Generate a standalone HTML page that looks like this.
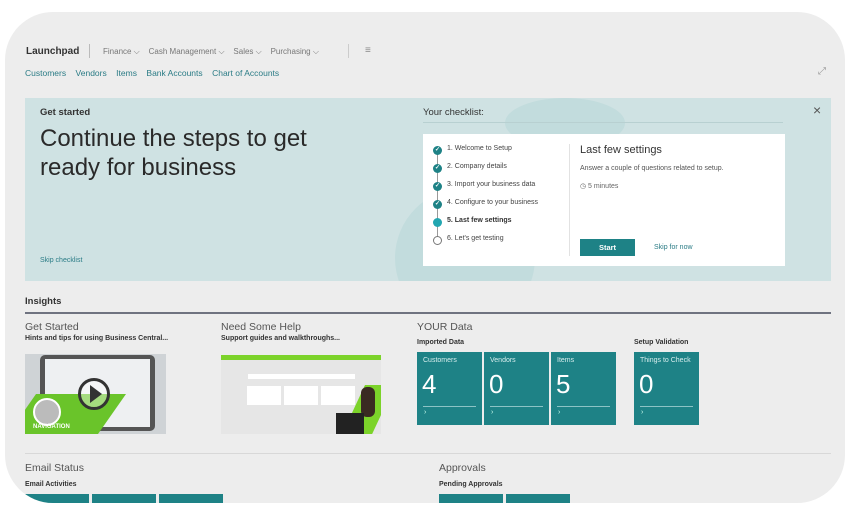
<!DOCTYPE html>
<html><head><style>
*{margin:0;padding:0;box-sizing:border-box}
body{width:850px;height:514px;background:#fff;font-family:"Liberation Sans",sans-serif;position:relative;overflow:hidden}
.card{position:absolute;left:5px;top:12px;width:840px;height:491px;background:#ededed;border-radius:48px;overflow:hidden}
.a{position:absolute;white-space:nowrap}
.teal{color:#2b7c86}
.tile{position:absolute;background:#1e8286;color:#fff}
.tile .t{position:absolute;left:6px;top:5px;font-size:7px;color:#d8eeee}
.tile .n{position:absolute;left:5px;top:17px;font-size:26px;font-weight:300}
.tile .l{position:absolute;left:6px;right:6px;top:54px;height:1px;background:#8cc3c5}
.tile .c{position:absolute;left:7px;top:57px;font-size:7px;color:#cfe}
.chk{position:absolute;left:10px;width:9px;height:9px;border-radius:50%;background:#1e8286;color:#fff;font-size:6px;line-height:9px;text-align:center;font-weight:bold}
.st{position:absolute;left:24px;font-size:7px;color:#444}
</style></head><body>
<div class="card">
<div class="a" style="left:21px;top:34px;font-size:10px;font-weight:bold;color:#333">Launchpad</div>
<div class="a" style="left:84px;top:32px;width:1px;height:14px;background:#bbb"></div>
<div class="a" style="left:98px;top:35px;font-size:8px;color:#777">Finance ⌵ &nbsp;&nbsp;&nbsp;Cash Management ⌵ &nbsp;&nbsp;&nbsp;Sales ⌵ &nbsp;&nbsp;&nbsp;Purchasing ⌵</div>
<div class="a" style="left:343px;top:32px;width:1px;height:14px;background:#ccc"></div>
<div class="a" style="left:360px;top:33px;font-size:10px;color:#888">≡</div>
<div class="a teal" style="left:20px;top:56px;font-size:8.5px">Customers &nbsp;&nbsp;&nbsp;Vendors &nbsp;&nbsp;&nbsp;Items &nbsp;&nbsp;&nbsp;Bank Accounts &nbsp;&nbsp;&nbsp;Chart of Accounts</div>
<div class="a" style="left:813px;top:54px;font-size:10px;color:#999">⤢</div>

<div class="a" style="left:20px;top:86px;width:806px;height:183px;background:#cfe2e3;overflow:hidden">
 <div class="a" style="left:370px;top:90px;width:140px;height:140px;border-radius:50%;background:#c2dcdd"></div>
 <div class="a" style="left:480px;top:0px;width:120px;height:50px;border-radius:50%;background:#c2dcdd"></div>
 <div class="a" style="left:15px;top:9px;font-size:9.5px;font-weight:bold;color:#333">Get started</div>
 <div class="a" style="left:15px;top:26px;font-size:24px;color:#2a2a2a;line-height:29px">Continue the steps to get<br>ready for business</div>
 <div class="a teal" style="left:15px;top:159px;font-size:7px">Skip checklist</div>
 <div class="a" style="left:398px;top:9px;font-size:9.5px;color:#333">Your checklist:</div>
 <div class="a" style="left:398px;top:24px;width:360px;height:1px;background:#b8d0d1"></div>
 <div class="a" style="left:788px;top:4px;font-size:14px;color:#555">×</div>
 <div class="a" style="left:398px;top:36px;width:362px;height:132px;background:#fff">
  <div class="a" style="left:14px;top:16px;width:1px;height:90px;background:#999"></div>
  <div class="chk" style="top:12px">✓</div><div class="st" style="top:11px">1. Welcome to Setup</div>
  <div class="chk" style="top:30px">✓</div><div class="st" style="top:29px">2. Company details</div>
  <div class="chk" style="top:48px">✓</div><div class="st" style="top:47px">3. Import your business data</div>
  <div class="chk" style="top:66px">✓</div><div class="st" style="top:65px">4. Configure to your business</div>
  <div class="chk" style="top:84px;background:#22a6b0"></div><div class="st" style="top:83px;font-weight:bold;color:#333">5. Last few settings</div>
  <div class="chk" style="top:102px;background:#fff;border:1px solid #777"></div><div class="st" style="top:101px">6. Let's get testing</div>
  <div class="a" style="left:146px;top:10px;width:1px;height:112px;background:#e2e2e2"></div>
  <div class="a" style="left:157px;top:10px;font-size:11px;color:#333">Last few settings</div>
  <div class="a" style="left:157px;top:31px;font-size:7px;color:#555">Answer a couple of questions related to setup.</div>
  <div class="a" style="left:157px;top:48px;font-size:7px;color:#666">◷ 5 minutes</div>
  <div class="a" style="left:157px;top:105px;width:55px;height:17px;background:#1e8286;color:#fff;font-size:7.5px;font-weight:bold;text-align:center;line-height:17px">Start</div>
  <div class="a teal" style="left:231px;top:110px;font-size:7px">Skip for now</div>
 </div>
</div>

<div class="a" style="left:20px;top:284px;font-size:9.5px;font-weight:bold;color:#333">Insights</div>
<div class="a" style="left:20px;top:300px;width:806px;height:1.5px;background:#6f7380"></div>

<div class="a" style="left:20px;top:309px;font-size:10.5px;color:#555">Get Started</div>
<div class="a" style="left:20px;top:323px;font-size:7px;font-weight:bold;color:#333">Hints and tips for using Business Central...</div>
<div class="a" style="left:20px;top:342px;width:141px;height:80px;background:#cfd3d6;overflow:hidden">
 <div class="a" style="left:15px;top:1px;width:115px;height:76px;background:#555;border-radius:5px"></div>
 <div class="a" style="left:20px;top:5px;width:105px;height:68px;background:#eef0f2"></div>
 <div class="a" style="left:-10px;top:40px;width:90px;height:60px;background:#6ac42a;transform:skewX(-35deg)"></div>
 <div class="a" style="left:8px;top:44px;width:28px;height:28px;border-radius:50%;background:#bbb;border:2px solid #fff"></div>
 <div class="a" style="left:53px;top:24px;width:32px;height:32px;border-radius:50%;border:3px solid #333;background:rgba(255,255,255,.4)"></div>
 <div class="a" style="left:65px;top:31px;width:0;height:0;border-left:12px solid #333;border-top:9px solid transparent;border-bottom:9px solid transparent"></div>
 <div class="a" style="left:8px;top:70px;font-size:6px;font-weight:bold;color:#fff">NAVIGATION</div>
</div>

<div class="a" style="left:216px;top:309px;font-size:10.5px;color:#555">Need Some Help</div>
<div class="a" style="left:216px;top:323px;font-size:7px;font-weight:bold;color:#333">Support guides and walkthroughs...</div>
<div class="a" style="left:216px;top:343px;width:160px;height:79px;background:#e6e6e6;overflow:hidden">
 <div class="a" style="left:0;top:0;width:160px;height:5px;background:#7cd32a"></div>
 <div class="a" style="left:27px;top:19px;width:107px;height:5px;background:#fff"></div>
 <div class="a" style="left:26px;top:31px;width:34px;height:19px;background:#fff"></div>
 <div class="a" style="left:63px;top:31px;width:34px;height:19px;background:#fff"></div>
 <div class="a" style="left:100px;top:31px;width:34px;height:19px;background:#fff"></div>
 <div class="a" style="left:130px;top:30px;width:30px;height:60px;background:#7cd32a;transform:skewX(-25deg)"></div>
 <div class="a" style="left:140px;top:32px;width:14px;height:30px;background:#3a2a22;border-radius:6px"></div>
 <div class="a" style="left:115px;top:58px;width:28px;height:21px;background:#222"></div>
</div>

<div class="a" style="left:412px;top:309px;font-size:10.5px;color:#555">YOUR Data</div>
<div class="a" style="left:412px;top:327px;font-size:7px;font-weight:bold;color:#333">Imported Data</div>
<div class="a" style="left:629px;top:327px;font-size:7px;font-weight:bold;color:#333">Setup Validation</div>
<div class="tile" style="left:412px;top:340px;width:65px;height:73px"><div class="t">Customers</div><div class="n">4</div><div class="l"></div><div class="c">›</div></div>
<div class="tile" style="left:479px;top:340px;width:65px;height:73px"><div class="t">Vendors</div><div class="n">0</div><div class="l"></div><div class="c">›</div></div>
<div class="tile" style="left:546px;top:340px;width:65px;height:73px"><div class="t">Items</div><div class="n">5</div><div class="l"></div><div class="c">›</div></div>
<div class="tile" style="left:629px;top:340px;width:65px;height:73px"><div class="t">Things to Check</div><div class="n">0</div><div class="l"></div><div class="c">›</div></div>

<div class="a" style="left:20px;top:441px;width:806px;height:1px;background:#d8d8d8"></div>
<div class="a" style="left:20px;top:450px;font-size:10.5px;color:#555">Email Status</div>
<div class="a" style="left:20px;top:469px;font-size:7px;font-weight:bold;color:#333">Email Activities</div>
<div class="tile" style="left:20px;top:482px;width:64px;height:20px"></div>
<div class="tile" style="left:87px;top:482px;width:64px;height:20px"></div>
<div class="tile" style="left:154px;top:482px;width:64px;height:20px"></div>
<div class="a" style="left:434px;top:450px;font-size:10.5px;color:#555">Approvals</div>
<div class="a" style="left:434px;top:469px;font-size:7px;font-weight:bold;color:#333">Pending Approvals</div>
<div class="tile" style="left:434px;top:482px;width:64px;height:20px"></div>
<div class="tile" style="left:501px;top:482px;width:64px;height:20px"></div>
</div>
</body></html>
